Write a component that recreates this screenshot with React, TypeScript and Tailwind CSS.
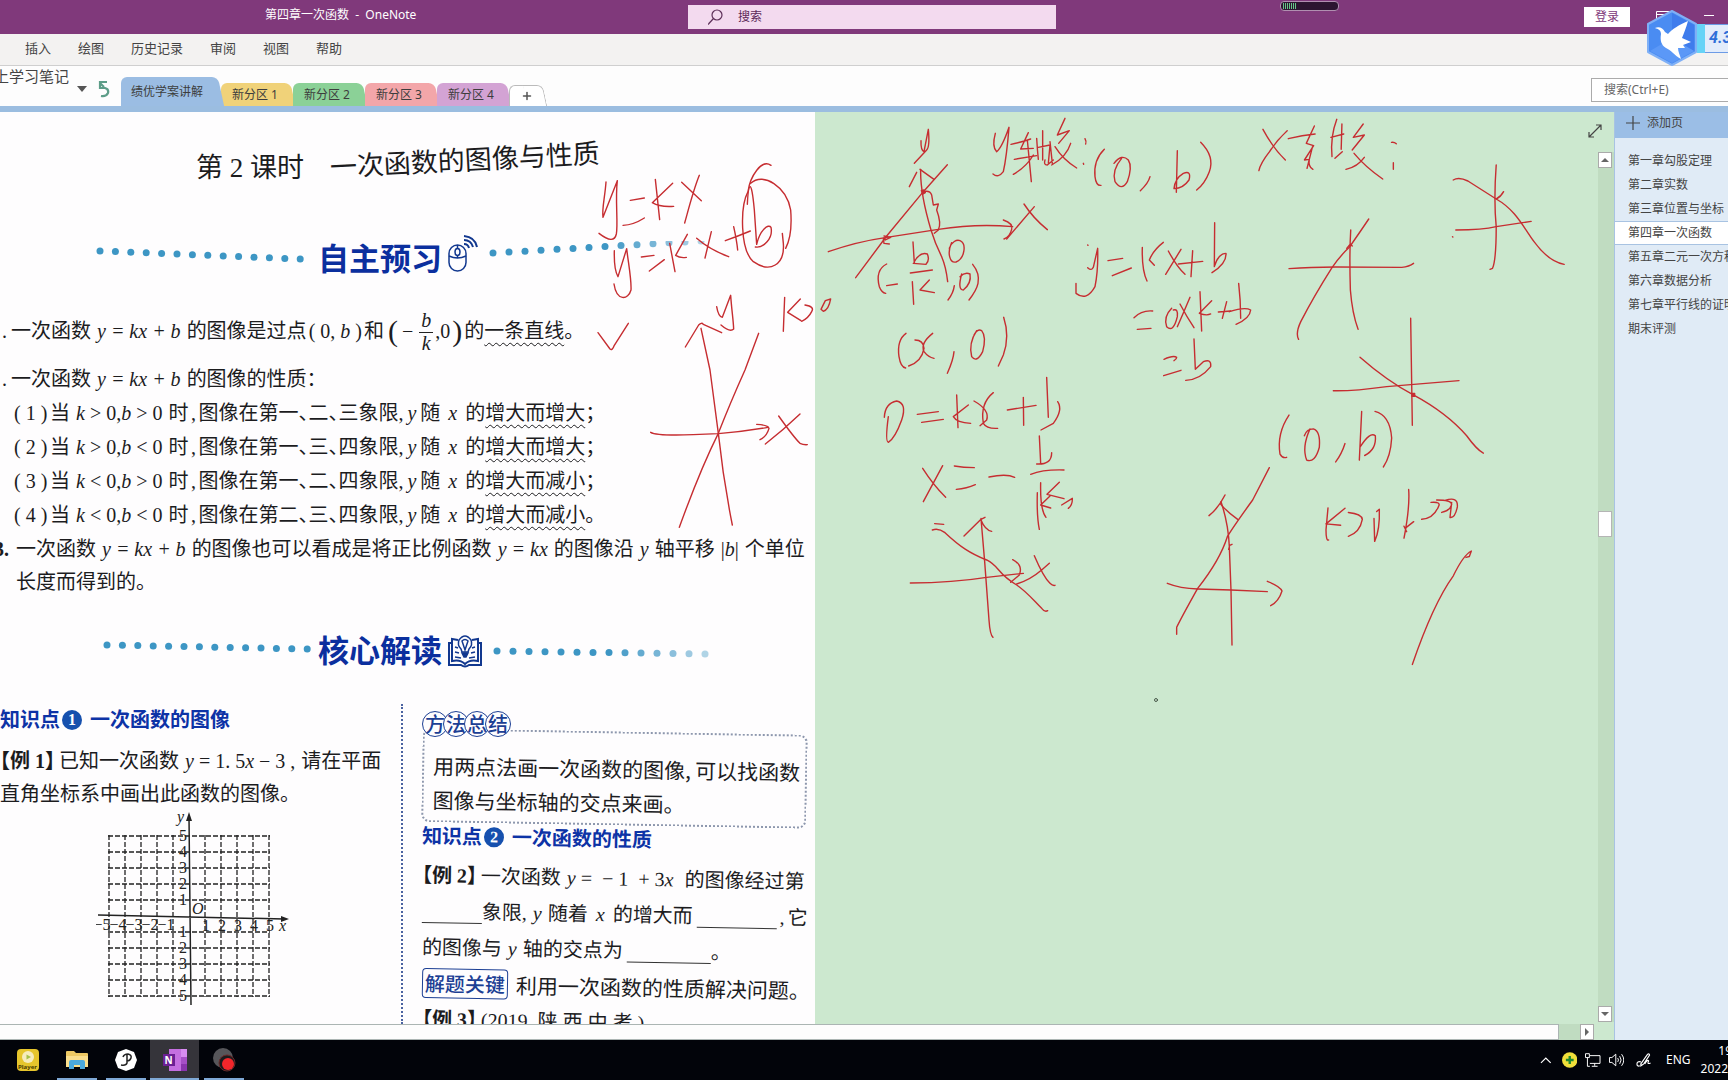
import React from "react";
import { Plus } from "lucide-react";

const sections = [
  { name: "新分区 1", color: "bg-[#f0d279]" },
  { name: "新分区 2", color: "bg-[#8bd197]" },
  { name: "新分区 3", color: "bg-[#f3a6a9]" },
  { name: "新分区 4", color: "bg-[#d3a3d4]" },
];

const pages = [
  "第一章勾股定理",
  "第二章实数",
  "第三章位置与坐标",
  "第四章一次函数",
  "第五章二元一次方程",
  "第六章数据分析",
  "第七章平行线的证明",
  "期末评测",
];

const rules = [
  { n: 1, k: ">", b: ">", q: "一、二、三", end: "增大而增大", stop: "；" },
  { n: 2, k: ">", b: "<", q: "一、三、四", end: "增大而增大", stop: "；" },
  { n: 3, k: "<", b: ">", q: "一、二、四", end: "增大而减小", stop: "；" },
  { n: 4, k: "<", b: "<", q: "二、三、四", end: "增大而减小", stop: "。" },
];

/* Pen strokes, one list per area of the canvas, each with its own scale. */
const inkAreas = [
  {
    transform: "translate(410 110) scale(.33333)",
    strokes: [
      "M588 216C585 260 575 300 579 322L622 212C615 270 625 340 619 372Q612 405 567 370",
      "M661 271L703 264M639 346Q670 345 703 324",
      "M736 208L749 329M788 220L727 278Q750 292 791 289",
      "M815 217L874 272M868 196C850 240 835 300 824 339",
      "M613 422C612 460 618 490 624 500L650 416C655 460 665 510 663 540C655 570 620 575 612 522",
      "M694 441L732 436M718 483L763 449",
      "M779 400L795 485M832 373L797 436Q810 445 829 442",
      "M860 385Q900 420 956 440M904 365L885 444",
      "M946 392Q980 380 1021 363M971 350Q980 390 983 420",
      "M1012 283C1015 220 1024 200 1033 300L1040 403C1050 360 1075 340 1083 352C1090 385 1060 415 1036 411",
      "M1083 166C1055 145 1020 200 1014 245C990 290 990 420 1030 455C1080 490 1125 465 1120 400L1117 370",
      "M1022 220C1060 185 1130 230 1142 300C1146 350 1140 390 1127 415",
      "M564 668L600 717Q607 722 612 708L655 640",
      "M920 590Q925 620 937 622L962 556C965 600 970 630 971 657Q960 668 933 645",
      "M826 711L866 645Q875 636 880 643L935 668",
      "M873 655L900 780L925 970Q940 1110 967 1245",
      "M1046 670L1005 780Q960 880 925 970Q870 1080 808 1252",
      "M722 967Q740 978 850 974L925 971Q1000 965 1075 952",
      "M1040 943Q1075 945 1077 955Q1070 980 1050 989",
      "M1106 918Q1150 980 1170 1000Q1180 1005 1192 1004M1170 912Q1120 960 1066 1002",
      "M1124 562L1120 664M1171 567L1133 607L1173 632",
      "M1185 585Q1215 590 1205 605Q1195 625 1175 634",
      "M1233 598L1246 572L1262 567Q1256 600 1240 604Z",
    ],
  },
  {
    transform: "translate(820 110) scale(.33333)",
    strokes: [
      "M303 92Q302 120 312 125L325 58Q330 110 320 120L283 160",
      "M302 178Q300 250 333 360Q345 400 365 440Q378 470 383 515",
      "M268 230L290 187M300 178L342 208",
      "M382 164L310 245L200 378L107 503",
      "M25 425Q110 395 200 382L355 358Q470 340 578 350",
      "M550 330Q580 340 575 358Q570 380 552 387",
      "M612 282Q640 325 682 359M643 290L560 387",
      "M310 245Q330 240 335 255L340 285L355 282L350 300Q365 340 355 360L343 370",
      "M192 378L212 382L196 390L190 385L192 400L208 402M304 242l8 -2l4 8l-8 4l-3 -8l8 4",
      "M395 398C380 430 390 460 408 456C435 445 440 400 420 392C410 388 395 395 388 415",
      "M279 396L283 460M283 455Q300 425 322 432Q330 450 318 463L280 460",
      "M271 489L337 480",
      "M200 462Q165 480 178 530Q185 548 197 550M200 527L232 522",
      "M277 515L281 583M328 510L300 540L343 548",
      "M403 527Q400 550 384 570",
      "M425 492Q412 540 430 540Q455 520 450 492Q435 485 420 500",
      "M458 463Q480 490 474 520Q470 540 447 570",
      "M258 670Q230 690 237 740Q242 772 257 774",
      "M285 690Q310 690 312 715Q305 755 266 768M338 670Q300 700 312 725Q325 742 342 745",
      "M402 725Q400 750 382 790",
      "M470 662Q445 700 455 740Q470 760 488 725Q500 680 485 662Q472 655 462 675",
      "M551 622Q570 680 550 735L535 768",
      "M526 70Q515 110 530 125Q545 115 567 52Q560 140 550 185Q535 205 519 192",
      "M573 103Q610 95 632 87M625 68L602 117L640 115M580 193Q620 170 640 135M622 90L634 215M583 148L650 137",
      "M650 85Q652 120 655 148M668 62L668 150M655 112L690 105L685 160M675 150Q670 165 682 165L700 150M690 95L697 160",
      "M735 25L712 75L748 62L716 100M752 100Q740 140 695 165M705 110Q730 150 770 174",
      "M795 86Q800 95 797 102M790 160L791 163",
      "M853 118Q820 150 825 200Q828 228 843 226",
      "M905 145Q875 180 885 215Q905 245 922 215Q938 170 925 150Q905 130 882 160",
      "M990 200Q985 220 961 242",
      "M1072 122L1069 247M1062 236Q1065 205 1090 190Q1115 180 1107 210Q1090 235 1062 236",
      "M1142 97Q1185 140 1168 185Q1155 220 1130 240",
      "M803 405L804 406M803 473Q815 484 820 472L833 415Q835 480 825 530Q800 575 768 550L768 520",
      "M864 452L908 445M877 497L934 474",
      "M967 412Q965 480 981 513M1030 397Q1000 420 988 450L1003 466",
      "M1045 423Q1070 470 1095 493M1083 418L1037 493",
      "M1075 462L1148 454M1118 422L1113 500",
      "M1184 338L1183 470Q1195 430 1218 430Q1220 460 1176 488",
      "M942 623Q965 600 998 603M952 658L993 655",
      "M1055 595Q1030 620 1040 650Q1060 670 1072 620Q1075 595 1060 600",
      "M1080 582Q1100 620 1122 653M1110 562Q1090 610 1072 650",
      "M1140 545L1145 663M1175 572L1138 610Q1160 618 1172 612",
      "M1195 606L1232 603M1220 575L1207 625",
      "M1256 520Q1262 570 1262 625M1228 605Q1275 590 1292 600Q1290 625 1248 643",
      "M1032 748Q1060 735 1070 742Q1070 748 1062 752M1031 797L1083 781",
      "M1122 687L1126 778L1150 755Q1175 745 1172 770Q1140 810 1097 811",
    ],
  },
  {
    transform: "translate(820 390) scale(.33333)",
    strokes: [
      "M193 82Q195 40 230 33Q262 40 245 90Q225 145 205 157Q195 155 205 80",
      "M292 73L355 65M305 97L370 88",
      "M410 15L414 113M445 45L400 80Q410 98 452 100",
      "M462 33Q510 60 500 90L480 107M520 8Q480 40 490 100Q500 117 533 115",
      "M562 60L648 46M610 22L611 106",
      "M680 -38L685 82M713 35Q730 60 700 100L663 120",
      "M308 235Q340 285 377 322M368 227L310 335",
      "M403 228Q430 233 463 233M409 298Q440 296 466 284M507 261Q560 250 584 262",
      "M658 138L662 220M650 222Q695 225 695 188M632 253Q670 238 732 240",
      "M662 278Q660 360 678 382M652 308Q650 380 658 418M718 277L681 313L732 326M690 318L662 345L692 354M725 345L757 325Q758 345 745 355",
      "M344 401L371 403",
      "M337 420Q355 413 375 428C420 470 450 490 500 510C540 530 530 550 590 585C620 605 640 630 665 655Q675 668 683 662",
      "M483 385L494 515L507 690Q510 735 519 742M432 438L483 388L495 382M483 390Q495 420 515 424",
      "M271 579Q400 578 500 562L610 550M578 509Q610 525 598 555L572 577",
      "M643 497Q670 560 690 580Q698 588 705 586M688 520L665 540Q630 570 590 582",
      "M1348 233L1298 330Q1240 410 1222 440Q1200 510 1133 595Q1080 690 1070 712L1070 733",
      "M1167 377Q1195 355 1215 315M1200 340Q1220 365 1253 388",
      "M1203 335Q1225 400 1228 470L1233 600L1236 765M1226 478L1229 466L1236 463",
      "M1042 580Q1080 595 1133 597L1233 600L1342 605M1342 574Q1382 590 1386 603Q1376 635 1352 647",
    ],
  },
  {
    transform: "translate(1270 360) scale(.33333 .45914)",
    strokes: [
      "M57 120Q20 160 30 205Q38 215 50 212",
      "M120 150Q95 190 110 218Q135 225 148 190Q152 155 130 150Q110 150 103 165",
      "M225 182Q215 205 197 222",
      "M275 112L268 218M270 190Q300 155 316 165Q320 195 284 208",
      "M315 112Q360 120 365 170Q362 210 340 233",
      "M422 -91L427 142M270 -6Q350 45 430 76Q530 115 590 165Q620 195 640 203",
      "M190 67Q250 68 350 58L567 45M426 73l8 0l0 6l-8 0zl8 6",
      "M174 322L168 370Q168 395 176 392M225 323L168 357L212 360",
      "M235 332Q275 335 277 347Q270 375 235 384",
      "M312 345L314 395Q330 370 328 325L320 330",
      "M416 282Q420 320 402 388L408 365L431 352M402 362L410 374",
      "M483 310Q515 308 505 320Q490 345 455 347",
      "M500 305Q545 305 545 315Q540 328 515 332M525 306Q565 296 562 320Q555 345 540 343L545 310",
      "M427 663Q490 530 550 470Q580 425 604 416L598 428L588 430",
    ],
  },
  {
    transform: "translate(1152 0) scale(.36735 .33333)",
    strokes: [
      "M302 388Q330 445 363 480M368 392Q340 420 320 455Q295 490 291 512",
      "M371 416Q410 405 444 402M442 378L420 430L440 437L415 480L428 478Q425 500 438 508M437 440L422 505",
      "M503 358Q485 410 490 470M517 372L515 448M487 412L522 402M498 475L518 455",
      "M575 372L548 412L578 405L545 450M578 472Q560 500 528 508M550 460Q580 500 628 537",
      "M652 427Q660 426 665 431M657 488L657 508M818 710L819 711",
      "M820 540Q835 530 860 543L937 597C990 630 1010 680 1040 725Q1080 785 1122 793",
      "M937 495Q930 600 937 680Q937 780 927 805L920 808",
      "M827 690Q900 690 937 680L1032 664M957 575Q950 590 937 597",
      "M590 657Q570 690 537 742Q510 770 490 803Q440 890 405 965Q390 1000 399 1018",
      "M541 690Q537 760 540 870Q545 940 561 988M530 745L540 732L545 738",
      "M373 806Q430 802 500 801L680 802Q700 800 712 790",
    ],
  },
];

function Ink() {
  return (
    <svg className="pointer-events-none absolute left-0 top-0 h-[912px] w-[1598px]" viewBox="0 112 1598 912" fill="none" stroke="#c62d31" strokeWidth="1.4" strokeLinecap="round" strokeLinejoin="round" aria-label="手写笔记" role="img">
      {inkAreas.map((a, i) => (
        <g key={i} transform={a.transform}>
          {a.strokes.map((d, j) => (
            <path key={j} d={d} vectorEffect="non-scaling-stroke" />
          ))}
        </g>
      ))}
      <circle cx="1156" cy="700" r="1.5" stroke="#4a5a4c" strokeWidth="1" />
    </svg>
  );
}

function M({ children, wide }: { children: React.ReactNode; wide?: boolean }) {
  return <i className={"whitespace-pre " + (wide ? "px-2" : "px-1.5")}>{children}</i>;
}

function N({ children }: { children: React.ReactNode }) {
  return <span className="not-italic">{children}</span>;
}

function Dots({ from, to, start, pitch, fade }: { from: number; to: number; start: number; pitch: number; fade?: boolean }) {
  return (
    <svg className="h-9 w-[222px] shrink-0" viewBox="0 -12 222 36">
      {Array.from({ length: 14 }, (_, i) => (
        <circle key={i} cx={start + i * pitch} cy={from + ((to - from) * i) / 13} r="3.5" fill="#3d96c4" opacity={fade && i > 7 ? 1 - (i - 7) * 0.1 : 1} />
      ))}
    </svg>
  );
}

function Heading({ title, icon, dots, start }: { title: string; icon: React.ReactNode; dots: number[]; start: number }) {
  return (
    <>
      <Dots from={dots[0]} to={dots[1]} start={start} pitch={15.4} />
      <h2 className="w-[129px] shrink-0 whitespace-nowrap text-[31px] font-bold leading-none text-[#0b2f9e]">{title}</h2>
      {icon}
      <Dots from={dots[2]} to={dots[3]} start={4} pitch={16} fade />
    </>
  );
}

function MouseIcon() {
  return (
    <svg className="mb-2.5 mr-2 h-[38px] w-[34px] shrink-0" viewBox="0 0 34 38" fill="none" stroke="#12388f" strokeWidth="1.5">
      <rect x="2" y="10" width="17" height="26" rx="8.5" />
      <path d="M2 21Q10.500 25 19 21M10.500 10V14M10.500 20V23" />
      <ellipse cx="10.500" cy="17" rx="2.500" ry="3.500" />
      <path d="M17 9Q21 9 22 13M17 5Q24 5 26 12M17 1Q28 2 30 12" strokeWidth="2" />
    </svg>
  );
}

function BookIcon() {
  return (
    <svg className="mr-2.5 h-[34px] w-[36px] shrink-0" viewBox="0 0 36 34" fill="none" stroke="#12388f" strokeWidth="1.5">
      <path d="M11 6L5 5V27Q13 25 18 30Q23 25 31 27V5L25 6M5 9H2V31H14Q18 34 22 31H34V9H31" strokeWidth="2" />
      <path d="M8 13L11 14M8 18L12 19M8 23L14 24M28 13L25 14M28 18L24 19M28 23L22 24" />
      <path d="M14 15Q10 11 12 6Q18 -2 24 6Q26 11 22 15L21 18H15ZM15 7Q18 4 21 7L18 16Z" fill="#fefdfe" />
      <path d="M15 19H21L19 23H17Z" fill="#12388f" />
    </svg>
  );
}

function Grid() {
  const steps = [-5, -4, -3, -2, -1, 1, 2, 3, 4, 5];
  return (
    <svg className="ml-[96px] h-[196px] w-[196px]" viewBox="96 811 196 196" fontFamily="Liberation Serif, serif" fontSize="16" fill="#222">
      <g stroke="#222" strokeWidth="1.3" strokeDasharray="5 2">
        {steps.map((s) => (
          <React.Fragment key={s}>
            <path d={`M${189 + s * 16} ${917 - 81}V${917 + 81}`} />
            <path d={`M108 ${917 + s * 16}H270`} />
          </React.Fragment>
        ))}
      </g>
      <path d="M98 916L284 920M189 818L191 1006" stroke="#222" strokeWidth="1.5" />
      <path d="M189 813L192 822H186ZM289 920L281 917V923Z" />
      {[1, 2, 3, 4, 5].map((n) => (
        <React.Fragment key={n}>
          <text x={179} y={922 - n * 16}>{n}</text>
          <text x={179} y={922 + n * 16}>{n}</text>
          <text x={186 + n * 16} y={932}>{n}</text>
          <text x={182 - n * 16} y={931} textAnchor="middle">{"−" + n}</text>
        </React.Fragment>
      ))}
      <text x="177" y="823" fontStyle="italic">y</text>
      <text x="279" y="932" fontStyle="italic">x</text>
      <text x="192" y="915" fontStyle="italic">O</text>
    </svg>
  );
}

function Topic({ n, children }: { n: number; children: React.ReactNode }) {
  return (
    <>
      <b className="text-[#0d33a6]">知识点</b>
      <span className="mx-[2px] flex h-5 w-5 items-center justify-center rounded-full bg-[#1650ae] text-base font-bold text-white">{n}</span>
      <b className="ml-1.5 text-[#0d33a6]">{children}</b>
    </>
  );
}

function Example({ n }: { n: number }) {
  return <b className="mr-1 shrink-0 whitespace-pre [font-feature-settings:'halt']">【例 {n}】</b>;
}

function Blank({ width }: { width: string }) {
  return <span className={"h-6 border-b border-[#333] " + width} />;
}

function Worksheet() {
  return (
    <article className="flex w-[815px] shrink-0 flex-col overflow-hidden whitespace-nowrap bg-[#fefdfe] font-['Liberation_Serif','Noto_Sans_CJK_SC',serif] text-xl leading-none text-[#1c1c1e]">
      <h1 className="flex h-[112px] shrink-0 items-center pl-[196px] text-[27px]">
        <span>第 2 课时</span>
        <span className="ml-[26px] origin-left -rotate-3">一次函数的图像与性质</span>
      </h1>
      <div className="flex h-[70px] shrink-0 items-center pl-[96px]">
        <Heading title="自主预习" icon={<MouseIcon />} dots={[-2, 6, 0, -12]} start={4} />
      </div>
      <p className="flex h-[74px] shrink-0 items-center">
        <span className="w-[11px] pl-[2px]">.</span>一次函数<M>y = kx + b</M>的图像是过点
        <span className="px-[2px]">( 0,<i> b</i> )</span>和
        <span className="ml-[4px] text-[30px]">(</span>
        <span className="mx-[4px]">−</span>
        <i className="flex flex-col items-center px-[2px]">
          <span className="border-b border-[#222] px-[2px] pb-[2px]">b</span>
          <span>k</span>
        </i>
        <span>,0</span>
        <span className="mx-[2px] text-[30px]">)</span>的
        <span className="underline decoration-wavy decoration-1 underline-offset-4">一条直线</span>。
      </p>
      <p className="mb-1.5 flex h-[22px] shrink-0 items-center">
        <span className="w-[11px] pl-[2px]">.</span>一次函数<M>y = kx + b</M>的图像的性质：
      </p>
      {rules.map((r) => (
        <p key={r.n} className="flex h-[34px] shrink-0 items-center pl-[14px]">
          <span className="w-[36px]">( {r.n} )</span>当<M>k <N>{r.k} 0,</N>b <N>{r.b} 0</N></M>时
          <span className="w-2.5 text-center">,</span>
          <span className="[font-feature-settings:'halt']">图像在第{r.q}象限</span>
          <span>,</span>
          <i className="px-1">y</i>随<M wide>x</M>的
          <span className="underline decoration-wavy decoration-1 underline-offset-4">{r.end}</span>
          {r.stop}
        </p>
      ))}
      <p className="flex h-[34px] shrink-0 items-center">
        <span className="-ml-1.5 w-[22px]"><b>3.</b></span>一次函数<M>y = kx + b</M>的图像也可以看成是将正比例函数<M>y = kx</M>的图像沿<M>y</M>轴平移<M><N>|</N>b<N>|</N></M>个单位
      </p>
      <p className="flex h-8 shrink-0 items-center pl-[16px]">长度而得到的。</p>
      <div className="flex h-[106px] shrink-0 items-center pl-[96px]">
        <Heading title="核心解读" icon={<BookIcon />} dots={[0, 4, 6, 9]} start={11} />
      </div>
      <div className="flex min-h-0 flex-1">
        <section className="w-[401px] shrink-0">
          <p className="mb-2 flex h-8 items-center"><Topic n={1}>一次函数的图像</Topic></p>
          <p className="flex h-[34px] items-center">
            <Example n={1} />
            <span>已知一次函数</span>
            <M>y <N>= 1. 5</N>x <N>− 3 ,</N></M>请在平面
          </p>
          <p className="flex h-8 items-center">直角坐标系中画出此函数的图像。</p>
          <Grid />
        </section>
        <section className="relative min-w-0 flex-1 border-l-2 border-dotted border-[#4a62a0] pl-[19px]">
          <div className="relative z-10 mt-[7px] flex h-[26px] font-['Noto_Sans_CJK_SC',sans-serif] text-[#1c3f94]">
            {"方法总结".split("").map((c) => (
              <span key={c} className="-mr-[5px] flex h-[26px] w-[26px] items-center justify-center rounded-full border border-[#1c3f94] bg-[#fefdfe] font-medium">{c}</span>
            ))}
          </div>
          <div className="-mt-[9px] mr-2 h-[94px] origin-left rotate-1 rounded-lg border-2 border-dotted border-[#8d97ad] pl-[9px] pt-[18px] font-['Noto_Sans_CJK_SC',sans-serif] text-[21px]">
            <p className="flex h-[34px] items-center">用两点法画一次函数的图像<span className="w-2.5">,</span>可以找函数</p>
            <p className="flex h-[34px] items-center">图像与坐标轴的交点来画。</p>
          </div>
          <p className="mb-[7px] flex h-7 origin-left rotate-1 items-center"><Topic n={2}>一次函数的性质</Topic></p>
          <p className="flex h-9 origin-left rotate-1 items-center">
            <Example n={2} />
            <span>一次函数</span><M>y <N>=  − 1  + 3</N>x </M>的图像经过第
          </p>
          <p className="flex h-9 origin-left rotate-1 items-center">
            <Blank width="w-[60px]" />象限,<M>y</M>随着<M wide>x</M>的增大而<Blank width="ml-1 w-[80px]" /><span className="mx-[3px]">,</span>它
          </p>
          <p className="flex h-9 origin-left rotate-1 items-center">的图像与<M>y</M>轴的交点为<Blank width="ml-1 w-[84px]" />。</p>
          <p className="flex h-9 origin-left rotate-1 items-center font-['Noto_Sans_CJK_SC',sans-serif]">
            <span className="mr-2 rounded border border-[#1c3f94] px-[2px] py-1 font-medium text-[#1c3f94]">解题关键</span>
            <span className="text-[21px]">利用一次函数的性质解决问题。</span>
          </p>
          <p className="flex h-9 origin-left rotate-1 items-center">
            <Example n={3} />
            <span className="whitespace-pre">(2019  陕 西 中 考 )</span>
          </p>
        </section>
      </div>
    </article>
  );
}

function Tab({ name, color, active }: { name: string; color: string; active?: boolean }) {
  return (
    <button className={"relative text-xs text-[#3d3d3d] " + (active ? "z-10 h-[29px] w-[100px] pr-2" : "h-[23px] w-[72px] pr-1")}>
      <span className={"absolute inset-y-0 left-0 right-4 rounded-tl-md " + color} />
      <span className={"absolute inset-y-0 right-0 w-12 skew-x-12 rounded-tr-md " + color} />
      <span className="relative whitespace-nowrap">{name}</span>
    </button>
  );
}

function TaskButton({ label, open, current, children }: { label: string; open?: boolean; current?: boolean; children: React.ReactNode }) {
  return (
    <button aria-label={label} className={"relative flex h-full w-[49px] items-center justify-center " + (current ? "bg-[#35343a]" : "")}>
      {children}
      {open && <span className={"absolute bottom-0 h-0.5 bg-[#7fa9d6] " + (current ? "w-[49px]" : "w-10")} />}
    </button>
  );
}

export default function App() {
  return (
    <div className="flex h-screen flex-col overflow-hidden bg-white font-['Noto_Sans','Noto_Sans_CJK_SC',sans-serif] text-[#444]">
      <header className="relative flex h-[34px] shrink-0 items-center bg-[#80397b] text-xs text-white">
        <h1 className="w-[688px] shrink-0 whitespace-pre pb-1 pl-[265px]">第四章一次函数  -  OneNote</h1>
        <label className="flex h-6 w-[368px] shrink-0 items-center bg-[#f3daef] pl-5">
          <svg className="h-4 w-4 shrink-0" viewBox="0 0 16 16" fill="none" stroke="#5d3059" strokeWidth="1.2"><circle cx="9" cy="6" r="5" /><path d="M5.500 9.500L0 15.500" /></svg>
          <input aria-label="搜索" placeholder="搜索" className="ml-3.5 min-w-0 flex-1 bg-transparent outline-none placeholder:text-[#5d2a59]" />
        </label>
        <div className="ml-auto flex h-full items-center pr-3.5">
          <button className="h-5 w-[46px] bg-white text-[#80397b]">登录</button>
          <svg className="ml-[26px] h-3 w-3.5" viewBox="0 0 14 12" fill="none" stroke="white"><path d="M.5 .5H13.500V11.500H.5ZM.5 3.500H13.500M7 10V5M5 7L7 5L9 7" /></svg>
          <svg className="ml-[34px] h-3 w-2.5" viewBox="0 0 10 12" stroke="white"><path d="M0 4.500H10" /></svg>
        </div>
        <div className="absolute left-[1280px] top-[1px] flex h-2.5 w-[59px] items-center gap-px rounded border border-[#b08fb0] bg-[#2c1530] pl-0.5">
          {[0, 1, 2, 3, 4, 5, 6].map((i) => <span key={i} className="h-1.5 w-px bg-[#64c886]" />)}
        </div>
        <div className="absolute right-0 top-[10px] z-20 flex h-[56px] w-[81px] items-center">
          <svg className="h-[56px] w-[50px] shrink-0" viewBox="0 0 50 56">
            <path d="M25 1L49 14V42L25 55L1 42V14Z" fill="#4a8cf2" stroke="#7fb0f6" strokeWidth="2" strokeLinejoin="round" />
            <path d="M25 3L47 15V41L25 28Z" fill="#3f7cec" />
            <path d="M25 28L47 41L25 53L3 41Z" fill="#5b98f7" />
            <path d="M8 18C12 16 16 18 18 22L21 24C25 19 32 15 41 11C39 18 37 23 35 28L44 32L36 35L38 38L31 38C31 42 33 45 34 49C27 45 24 40 19 38C14 35 13 30 14 24C14 20 11 19 8 18Z" fill="white" />
          </svg>
          <span className="h-[29px] w-2 shrink-0 bg-[#66d3f7]" />
          <span className="flex h-[29px] flex-1 items-center border-y border-[#6c9be6] bg-[#e2ecfb] pl-1 font-['Roboto',sans-serif] text-base font-bold italic leading-none text-[#2f6fd8]">4.3</span>
        </div>
      </header>

      <nav className="flex h-8 shrink-0 items-center gap-[27px] border-b border-[#cfcfcf] bg-[#f3f2f1] pb-0.5 pl-[25px] text-[13px]">
        {["插入", "绘图", "历史记录", "审阅", "视图", "帮助"].map((m) => <button key={m}>{m}</button>)}
      </nav>

      <div className="flex h-10 shrink-0 items-end bg-[#fdfdfd]">
        <button className="relative -ml-[6px] mb-3.5 flex w-[97px] items-end text-[15px]">
          <span className="whitespace-nowrap pb-1 leading-6">上学习笔记</span>
          <svg className="ml-2 h-1.5 w-2.5 shrink-0" viewBox="0 0 10 6"><path d="M0 0H10L5 6Z" fill="#555" /></svg>
        </button>
        <button aria-label="同步" className="mb-2 ml-[6px] w-6">
          <svg className="h-[18px] w-3.5" viewBox="0 0 14 18" fill="none" stroke="#5d9d88" strokeWidth="2.2"><path d="M10 2H3V8H8Q12 9 11 13Q9 17 4 16M3 3L7 7" /></svg>
        </button>
        <div className="flex items-end">
          <Tab name="绩优学案讲解" color="bg-[#9bbde3]" active />
          {sections.map((s) => <Tab key={s.name} name={s.name} color={s.color} />)}
          <button aria-label="新建分区" className="relative flex h-[21px] w-9 items-center justify-center">
            <span className="absolute inset-y-0 left-0 right-4 rounded-tl-md border-l border-t border-[#bbb] bg-white" />
            <span className="absolute inset-y-0 right-0 w-5 skew-x-12 rounded-tr-md border-r border-t border-[#bbb] bg-white" />
            <Plus className="relative h-3 w-3 text-[#555]" strokeWidth={3} />
          </button>
        </div>
        <label className="mb-1 ml-auto flex h-6 w-[137px] shrink-0 items-center border border-r-0 border-[#ababab] bg-white pl-3 text-xs">
          <input aria-label="搜索笔记" placeholder="搜索(Ctrl+E)" className="w-full bg-transparent outline-none placeholder:text-[#666]" />
        </label>
      </div>
      <div className="h-1.5 shrink-0 bg-[#9bbde0]" />

      <div className="flex min-h-0 flex-1">
        <main className="flex min-w-0 flex-1 flex-col bg-[#cce8cf]">
          <div className="relative flex min-h-0 flex-1">
            <div className="flex min-w-0 flex-1 overflow-hidden">
              <Worksheet />
              <Ink />
            </div>
            <button aria-label="全页视图" className="absolute right-3 top-3 h-3.5 w-3.5">
              <svg viewBox="0 0 14 14" fill="none" stroke="#444" strokeWidth="1.2"><path d="M1 13L13 1M8 1H13V6M1 8V13H6" /></svg>
            </button>
            <div className="flex w-4 shrink-0 flex-col pb-0.5 pt-10">
              <div className="flex flex-1 flex-col bg-[#c0dcc1]">
                <button aria-label="向上滚动" className="flex h-4 w-3.5 items-center justify-center border border-[#aaa] bg-white"><svg className="h-1 w-2" viewBox="0 0 8 4"><path d="M0 4H8L4 0Z" fill="#666" /></svg></button>
                <div className="flex-[343]" />
                <div className="h-[26px] w-3.5 border border-[#b5b5b5] bg-white" />
                <div className="flex-[469]" />
                <button aria-label="向下滚动" className="flex h-4 w-3.5 items-center justify-center border border-[#aaa] bg-white"><svg className="h-1 w-2" viewBox="0 0 8 4"><path d="M0 0H8L4 4Z" fill="#666" /></svg></button>
              </div>
            </div>
          </div>
          <div className="flex h-4 shrink-0 pr-5">
            <div className="flex-1 border border-l-0 border-[#abb5b3] bg-[#fdfdfd]" />
            <div className="w-[21px] bg-[#c0dcc1]" />
            <button aria-label="向右滚动" className="flex w-3.5 items-center justify-center border border-[#aaa] bg-white"><svg className="h-2 w-1" viewBox="0 0 4 8"><path d="M0 0V8L4 4Z" fill="#666" /></svg></button>
          </div>
        </main>
        <aside className="flex w-[114px] shrink-0 flex-col overflow-hidden whitespace-nowrap border-l border-[#a8c3e2] bg-[#e0ebf6] text-xs">
          <button className="mb-[11px] flex h-[26px] shrink-0 items-center bg-[#9bbee6] pb-1 pl-2.5 text-[#444]">
            <svg className="mr-1.5 h-4 w-4" viewBox="0 0 16 16" stroke="#444" strokeWidth="1.2"><path d="M8 1V15M1 8H15" /></svg>添加页
          </button>
          <ul>
            {pages.map((p) => (
              <li key={p} className="h-6">
                <a href="#page" className={"flex h-6 items-center pl-[13px] " + (p === "第四章一次函数" ? "border-y border-[#a8c3e2] bg-white" : "")}>{p}</a>
              </li>
            ))}
          </ul>
        </aside>
      </div>

      <footer className="flex h-10 shrink-0 items-center overflow-hidden bg-[#02040a] pl-[3px] text-xs text-white">
        <TaskButton label="Player">
          <span className="flex h-[22px] w-[22px] flex-col items-center rounded-sm bg-[#e6c52c] pt-0.5 text-[#4a3b00]">
            <svg className="h-3 w-3 shrink-0" viewBox="0 0 12 12"><circle cx="6" cy="6" r="6" fill="#f6ecbd" /><path d="M4.500 3.500L9 6L4.500 8.500Z" fill="#a5c04a" /></svg>
            <span className="text-[6px] font-bold leading-[8px]">Player</span>
          </span>
        </TaskButton>
        <TaskButton label="文件资源管理器" open>
          <svg className="h-5 w-[22px]" viewBox="0 0 22 20"><path d="M0 2Q0 1 1 1H8L10 3H21Q22 3 22 4V17H0Z" fill="#eec964" /><path d="M0 6H22V17H0Z" fill="#fbdf8d" /><path d="M3 19V12Q3 10 5 10H17Q19 10 19 12V19H14V15H8V19Z" fill="#4ba9dd" /></svg>
        </TaskButton>
        <TaskButton label="P" open>
          <svg className="h-[22px] w-[22px]" viewBox="0 0 22 22"><path d="M11 0L19 3L22 11L19 19L11 22L3 19L0 11L3 3Z" fill="white" /><path d="M8 8Q9 5 13 5Q17 6 16 9Q15 12 12 12M12 6V14Q11 17 6 16" fill="none" stroke="#222" strokeWidth="1.500" /></svg>
        </TaskButton>
        <TaskButton label="OneNote" open current>
          <span className="relative h-[22px] w-6">
            <svg className="h-[22px] w-6" viewBox="0 0 24 22"><path d="M6 0H22Q24 0 24 2V20Q24 22 22 22H6Z" fill="#c46fe0" /><path d="M18 0H24V8H18Z" fill="#d78cf0" /><path d="M18 8H24V15H18Z" fill="#a64fc6" /><path d="M18 15H24V22H18Z" fill="#8a35ad" /><path d="M0 5H12V17H0Z" fill="#6b1f93" /></svg>
            <span className="absolute left-[2px] top-[5px] text-[10px] font-bold leading-3">N</span>
          </span>
        </TaskButton>
        <TaskButton label="录制" open>
          <svg className="h-6 w-6" viewBox="0 0 24 24"><circle cx="11" cy="10" r="10" fill="#56565a" /><circle cx="15" cy="15" r="8" fill="#1c1c1e" stroke="#6a2a2a" /><circle cx="16" cy="16" r="6" fill="#f2262b" /></svg>
        </TaskButton>
        <div className="ml-auto flex w-[188px] shrink-0 items-center">
          <svg className="h-2 w-3" viewBox="0 0 12 8" fill="none" stroke="white" strokeWidth="1.200"><path d="M1 7L6 2L11 7" /></svg>
          <svg className="ml-2.5 h-4 w-4" viewBox="0 0 16 16"><circle cx="8" cy="8" r="8" fill="#f0df3a" /><path d="M8 4V12M4 8H12" stroke="#1f8a2f" strokeWidth="2.500" /></svg>
          <svg className="ml-2 h-4 w-4" viewBox="0 0 16 16" fill="none" stroke="white"><path d="M5 3.500H15.500V11.500H5M7 14.500H13M10 11.500V14M.5 1.500H4.500V5.500H.5ZM2.500 5.500V14.500H5" /></svg>
          <svg className="ml-2 h-4 w-4" viewBox="0 0 16 16" fill="none" stroke="white"><path d="M.5 5.500H3L7 2V14L3 10.500H.5ZM9 6Q10.500 8 9 10M11 4Q14 8 11 12M13 2Q17.500 8 13 14" /></svg>
          <svg className="ml-3 h-4 w-4" viewBox="0 0 16 16" fill="none" stroke="white" strokeWidth="1.200"><path d="M5 12L12 2Q14 1 14 3L8 12L5 14ZM5 10Q1 9 1 12Q1 15 4 14M9 12Q12 7 13 9Q11 13 15 11" /></svg>
          <button className="ml-3.5 w-[26px]">ENG</button>
          <div className="ml-2 flex w-[30px] flex-col items-end leading-[18px]">
            <span className="-mr-1">19</span>
            <span>2022</span>
          </div>
        </div>
      </footer>
    </div>
  );
}
